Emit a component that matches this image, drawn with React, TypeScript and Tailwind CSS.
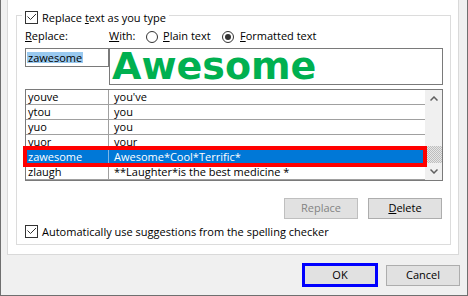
import React from "react";

function Check() {
  return (
    <span className="flex h-[13px] w-[13px] shrink-0 items-start justify-start border border-[#333333] bg-white">
      <svg width="11" height="11" viewBox="0 0 11 11">
        <polyline points="1.5,4.5 4.5,7.5 10,2" fill="none" stroke="#333333" strokeWidth="1" />
      </svg>
    </span>
  );
}

function Radio({ checked }: { checked?: boolean }) {
  return (
    <span className="mt-[4px] flex h-[12px] w-[12px] shrink-0 items-center justify-center rounded-full border border-[#333333] bg-white">
      {checked && <span className="h-[6px] w-[6px] rounded-full bg-[#333333]" />}
    </span>
  );
}

function Chevron({ up }: { up?: boolean }) {
  return (
    <svg width="8" height="5" viewBox="0 0 8 5">
      <polyline
        points={up ? "0.5,4.5 4,1 7.5,4.5" : "0.5,0.5 4,4 7.5,0.5"}
        fill="none"
        stroke="#606060"
        strokeWidth="1.5"
      />
    </svg>
  );
}

const rows: [string, string][] = [
  ["youve", "you've"],
  ["ytou", "you"],
  ["yuo", "you"],
  ["yuor", "your"],
  ["zawesome", "Awesome*Cool*Terrific*"],
  ["zlaugh", "**Laughter*is the best medicine *"],
];

export default function App() {
  return (
    <div className="flex h-[296px] w-[468px] flex-col border-x border-b border-[#6f6f6f] bg-[#f0f0f0] font-['Open_Sans',sans-serif] text-[11px] text-black">
      <div className="ml-[6px] h-[255px] w-[452px] shrink-0 border-x border-b border-[#d9d9d9] bg-white">
        <div className="ml-[8px] mt-[15px] flex h-[230px] w-[435px] flex-col border border-[#dcdcdc]">
          <div className="-mt-[5px] ml-[5px] flex h-[13px] w-fit items-center gap-[4px] bg-white px-[3px]">
            <Check />
            <span className="whitespace-nowrap leading-[13px]">
              Replace <span className="underline">t</span>ext as you type
            </span>
          </div>

          <div className="ml-[8px] mt-[3px] flex h-[16px] items-start leading-[17px]">
            <span className="w-[84px]">
              <span className="underline">R</span>eplace:
            </span>
            <span className="w-[37px]">
              <span className="underline">W</span>ith:
            </span>
            <Radio />
            <span className="ml-[5px] w-[59px] whitespace-nowrap">
              <span className="underline">P</span>lain text
            </span>
            <Radio checked />
            <span className="ml-[6px] whitespace-nowrap">
              <span className="underline">F</span>ormatted text
            </span>
          </div>

          <div className="ml-[8px] mt-[5px] flex items-start">
            <div className="h-[19px] w-[84px] shrink-0 border border-[#7a7a7a]">
              <span className="ml-[1px] mt-[3px] inline-block h-[11px] bg-[#99c9ef] px-[1px] leading-[11px]">
                zawesome
              </span>
            </div>
            <div className="h-[37px] w-[334px] shrink-0 overflow-hidden border border-[#7a7a7a]">
              <div className="-mt-[2px] pl-[2px] font-['DejaVu_Sans',sans-serif] text-[38px] font-bold leading-none text-[#00b050]">
                Awesome
              </div>
            </div>
          </div>

          <div className="relative ml-[8px] mt-[4px] flex h-[92px] w-[418px] border border-[#7a7a7a]">
            <div className="flex flex-1 flex-col">
              {rows.map(([a, b], i) => {
                const sel = i === 4;
                return (
                  <div
                    key={a}
                    className={
                      sel
                        ? "flex h-[15px] border-b border-[#a0a0a0] bg-[#0078d7] leading-[14px] text-white"
                        : "flex h-[15px] border-b border-[#a0a0a0] leading-[14px]"
                    }
                  >
                    <span
                      className={
                        sel
                          ? "w-[83px] shrink-0 border-r border-[#7fb7e8] pl-[2px]"
                          : "w-[83px] shrink-0 border-r border-[#a0a0a0] pl-[2px]"
                      }
                    >
                      {a}
                    </span>
                    <span className="whitespace-nowrap pl-[5px]">{b}</span>
                  </div>
                );
              })}
            </div>
            <div className="flex w-[17px] shrink-0 flex-col bg-[#f0f0f0]">
              <div className="flex h-[17px] items-center justify-center">
                <Chevron up />
              </div>
              <div className="flex flex-1 flex-col justify-end">
                <div className="h-[17px] bg-[repeating-conic-gradient(#bdbdbd_0_25%,#e6e6e6_0_50%)] bg-[length:2px_2px]" />
              </div>
              <div className="flex h-[17px] items-center justify-center">
                <Chevron />
              </div>
            </div>
            <div className="absolute left-[-3px] top-[56px] h-[21px] w-[404px] border-[4px] border-[#ff0000]" />
          </div>

          <div className="mr-[8px] mt-[17px] flex justify-end gap-[10px]">
            <div className="flex h-[21px] w-[74px] items-center justify-center border border-[#bfbfbf] bg-[#e1e1e1] text-[#838383]">
              Replace
            </div>
            <div className="flex h-[21px] w-[74px] items-center justify-center border border-[#adadad] bg-[#e1e1e1]">
              <span>
                <span className="underline">D</span>elete
              </span>
            </div>
          </div>

          <div className="ml-[8px] mt-[6px] flex h-[13px] items-center gap-[4px]">
            <Check />
            <span className="whitespace-nowrap leading-[13px]">
              Automatically use su<span className="underline">g</span>gestions from the spelling checker
            </span>
          </div>
        </div>
      </div>

      <div className="mr-[7px] mt-[8px] flex items-center justify-end gap-[8px]">
        <div className="flex h-[24px] w-[76px] items-center justify-center border-[3px] border-[#0000ff] bg-[#e1e1e1]">
          OK
        </div>
        <div className="flex h-[21px] w-[74px] items-center justify-center border border-[#adadad] bg-[#e1e1e1]">
          Cancel
        </div>
      </div>
    </div>
  );
}
